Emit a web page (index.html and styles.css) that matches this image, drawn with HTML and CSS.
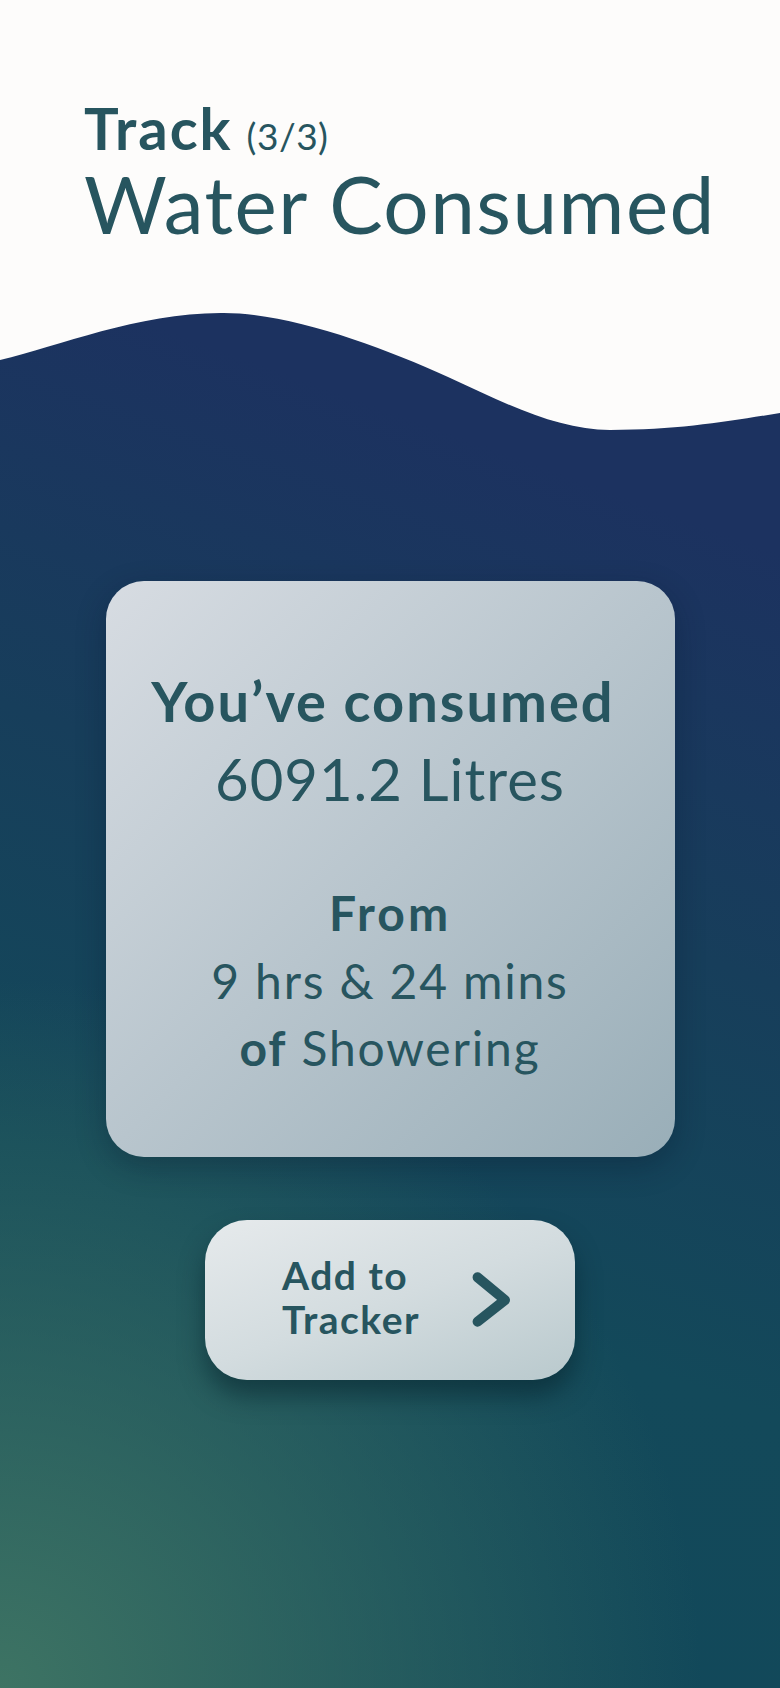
FILE: index.html
```html
<!DOCTYPE html>
<html lang="en">
<head>
<meta charset="utf-8">
<title>Track Water Consumed</title>
<link rel="stylesheet" href="styles.css">
</head>
<body>
<div class="screen">
  <header class="hero">
    <h1 class="hero-title">
      <span class="hero-step"><span class="hero-track">Track</span><span class="hero-count">(3/3)</span></span>
      <span class="hero-main">Water Consumed</span>
    </h1>
  </header>
  <svg class="wave" viewBox="0 0 780 190" preserveAspectRatio="none" aria-hidden="true">
    <path d="M0 0 H780 V167 C730 175 680 184 610 184 C560 184 510 160 448 131 C380 100 290 67 224 67 C140 66 60 100 0 114 Z" fill="#fdfcfb"/>
  </svg>
  <main class="content">
    <section class="card">
      <p class="card-lead">You’ve consumed</p>
      <p class="card-amount">6091.2 Litres</p>
      <p class="card-from">From</p>
      <p class="card-line">9 hrs &amp; 24 mins</p>
      <p class="card-line"><strong>of</strong> Showering</p>
    </section>
    <button class="add-btn" type="button">
      <span class="add-label">Add to<br>Tracker</span>
      <svg class="add-chevron" viewBox="0 0 44 60" aria-hidden="true">
        <polyline points="7.6,7.3 35,30 7.6,51.7" fill="none" stroke="#27555f" stroke-width="10" stroke-linecap="round" stroke-linejoin="round"/>
      </svg>
    </button>
  </main>
</div>
</body>
</html>
```

FILE: styles.css
```css
* {
  box-sizing: border-box;
}

html, body {
  margin: 0;
  padding: 0;
}

body {
  font-family: "Lato", "Noto Sans", sans-serif;
  color: #27555f;
}

.screen {
  width: 780px;
  min-height: 1688px;
  display: flex;
  flex-direction: column;
  background:
    radial-gradient(ellipse 90% 42% at 0% 100%, rgba(64, 118, 100, 0.95) 0%, rgba(64, 118, 100, 0) 100%),
    linear-gradient(200deg, #1c3260 0%, #1c3260 28%, #173e5b 50%, #13495a 72%, #11485a 100%);
}

.hero {
  background: #fdfcfb;
  padding: 96px 0 0 84px;
}

.hero-title {
  margin: 0;
  font-weight: 400;
  display: flex;
  flex-direction: column;
}

.hero-step {
  display: flex;
  align-items: baseline;
  gap: 14px;
  height: 64px;
}

.hero-track {
  font-size: 58px;
  line-height: 64px;
  font-weight: 700;
  letter-spacing: 2px;
}

.hero-count {
  font-size: 37px;
  line-height: 40px;
  font-weight: 400;
  letter-spacing: 0.5px;
}

.hero-main {
  font-size: 80px;
  line-height: 86px;
  font-weight: 400;
  letter-spacing: 1.5px;
}

.wave {
  display: block;
  width: 780px;
  height: 190px;
}

.content {
  display: flex;
  flex-direction: column;
  align-items: center;
  padding-top: 145px;
}

.card {
  width: 569px;
  padding: 83px 0 76px;
  border-radius: 38px;
  background: linear-gradient(135deg, #d7dce2 0%, #b8c5cd 50%, #99aeb8 100%);
  box-shadow: 0 10px 30px rgba(5, 20, 40, 0.3);
  text-align: center;
}

.card p {
  margin: 0;
}

.card-lead {
  font-size: 56px;
  line-height: 74px;
  font-weight: 700;
  letter-spacing: 2px;
  padding-right: 14px;
}

.card-amount {
  font-size: 58px;
  line-height: 82px;
  letter-spacing: 1px;
}

.card-from {
  margin-top: 59px !important;
  font-size: 48px;
  line-height: 68px;
  font-weight: 700;
  letter-spacing: 3px;
}

.card-line {
  font-size: 48px;
  line-height: 67px;
  letter-spacing: 1.8px;
}

.card-line strong {
  font-weight: 700;
}

.add-btn {
  margin-top: 63px;
  width: 370px;
  height: 160px;
  border: 0;
  border-radius: 42px;
  padding: 0 0 0 77px;
  display: flex;
  align-items: center;
  gap: 50px;
  background: linear-gradient(160deg, #e6eaec 0%, #d3dcdf 50%, #b9c9cd 100%);
  box-shadow: 0 16px 24px rgba(4, 30, 40, 0.5);
  font-family: inherit;
  color: #27555f;
  text-align: left;
  cursor: pointer;
}

.add-label {
  font-size: 39px;
  line-height: 44px;
  font-weight: 700;
  letter-spacing: 1.5px;
  padding-bottom: 6px;
}

.add-chevron {
  width: 44px;
  height: 60px;
  flex: none;
}
```
